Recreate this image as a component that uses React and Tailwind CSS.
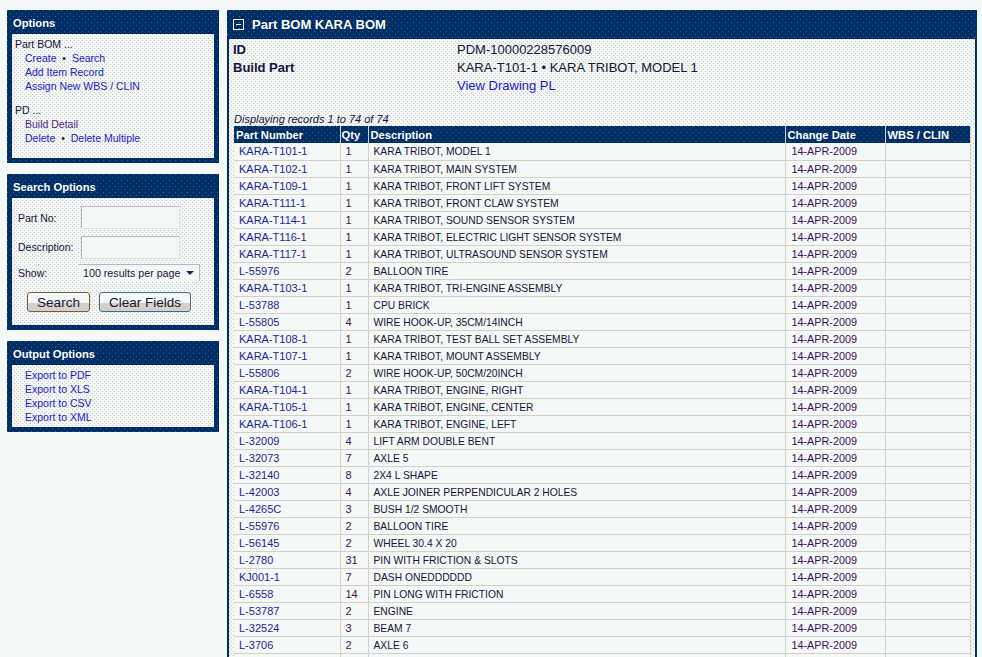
const rows = [
  ["KARA-T101-1", "1", "KARA TRIBOT, MODEL 1"],
  ["KARA-T102-1", "1", "KARA TRIBOT, MAIN SYSTEM"],
  ["KARA-T109-1", "1", "KARA TRIBOT, FRONT LIFT SYSTEM"],
  ["KARA-T111-1", "1", "KARA TRIBOT, FRONT CLAW SYSTEM"],
  ["KARA-T114-1", "1", "KARA TRIBOT, SOUND SENSOR SYSTEM"],
  ["KARA-T116-1", "1", "KARA TRIBOT, ELECTRIC LIGHT SENSOR SYSTEM"],
  ["KARA-T117-1", "1", "KARA TRIBOT, ULTRASOUND SENSOR SYSTEM"],
  ["L-55976", "2", "BALLOON TIRE"],
  ["KARA-T103-1", "1", "KARA TRIBOT, TRI-ENGINE ASSEMBLY"],
  ["L-53788", "1", "CPU BRICK"],
  ["L-55805", "4", "WIRE HOOK-UP, 35CM/14INCH"],
  ["KARA-T108-1", "1", "KARA TRIBOT, TEST BALL SET ASSEMBLY"],
  ["KARA-T107-1", "1", "KARA TRIBOT, MOUNT ASSEMBLY"],
  ["L-55806", "2", "WIRE HOOK-UP, 50CM/20INCH"],
  ["KARA-T104-1", "1", "KARA TRIBOT, ENGINE, RIGHT"],
  ["KARA-T105-1", "1", "KARA TRIBOT, ENGINE, CENTER"],
  ["KARA-T106-1", "1", "KARA TRIBOT, ENGINE, LEFT"],
  ["L-32009", "4", "LIFT ARM DOUBLE BENT"],
  ["L-32073", "7", "AXLE 5"],
  ["L-32140", "8", "2X4 L SHAPE"],
  ["L-42003", "4", "AXLE JOINER PERPENDICULAR 2 HOLES"],
  ["L-4265C", "3", "BUSH 1/2 SMOOTH"],
  ["L-55976", "2", "BALLOON TIRE"],
  ["L-56145", "2", "WHEEL 30.4 X 20"],
  ["L-2780", "31", "PIN WITH FRICTION & SLOTS"],
  ["KJ001-1", "7", "DASH ONEDDDDDD"],
  ["L-6558", "14", "PIN LONG WITH FRICTION"],
  ["L-53787", "2", "ENGINE"],
  ["L-32524", "3", "BEAM 7"],
  ["L-3706", "2", "AXLE 6"],
];

const navy = "bg-[#002d62] bg-[radial-gradient(circle_at_0.5px_0.5px,#1a6fd0_0.6px,transparent_0.7px),radial-gradient(circle_at_0.5px_0.5px,#1260b4_0.6px,transparent_0.7px)] bg-size-[6px_6px] bg-position-[0_0,3px_3px]";
const speckle = "bg-[#f4f8f7] bg-[radial-gradient(circle_at_0.5px_0.5px,#c4c4c0_0.6px,transparent_0.7px),radial-gradient(circle_at_0.5px_0.5px,#c4c4c0_0.6px,transparent_0.7px)] bg-size-[4px_4px] bg-position-[0_0,2px_2px]";

const Panel = ({ title, height, children }) => (
  <div className={`${navy} px-[5px] pb-[5px] w-[212px]`}>
    <h2 className="h-[24px] pl-[1px] pt-[6px] text-[11.2px] leading-[14px] font-bold text-white">{title}</h2>
    <div className={`${speckle} ${height}`}>{children}</div>
  </div>
);

const A = ({ children, visited }) => (
  <a href="#" className={visited ? "text-[#551a8b]" : "text-[#1a1acc]"}>{children}</a>
);

const Th = ({ children, pad }) => (
  <th className={`${navy} h-[17px] ${pad || "pl-[2px]"} text-left font-bold text-white border-r border-[#d4d0c8]`}>{children}</th>
);

export default function App() {
  return (
    <div className="h-[657px] overflow-hidden bg-[#f4f8f7] flex gap-[8px] pl-[7px] pt-[10px] text-[10.5px] leading-[14px] text-[#14143c] font-['Liberation_Sans',Arial,sans-serif]">
      <aside className="flex flex-col gap-[11px]">
        <Panel title="Options" height="h-[124px]">
          <div className="pl-[3px] pt-[3px]">
            <div>Part BOM ...</div>
            <div className="pl-[10px]">
              <div><A>Create</A> &nbsp;•&nbsp; <A>Search</A></div>
              <div><A>Add Item Record</A></div>
              <div><A>Assign New WBS / CLIN</A></div>
            </div>
            <div className="mt-[10px]">PD ...</div>
            <div className="pl-[10px]">
              <div><A visited>Build Detail</A></div>
              <div><A>Delete</A> &nbsp;•&nbsp; <A>Delete Multiple</A></div>
            </div>
          </div>
        </Panel>

        <Panel title="Search Options" height="h-[127px]">
          <div className="pl-[6px] pt-[8px]">
            <div className="flex items-center gap-[9px]">
              <span className="w-[54px]">Part No:</span>
              <input className="w-[99px] h-[23px] bg-[#f4f8f7] border-t border-l border-[#b4b8cc] border-b border-r border-b-[#e4e4e0] border-r-[#e4e4e0]" />
            </div>
            <div className="flex items-center gap-[9px] mt-[7px]">
              <span className="w-[54px] pb-[2px]">Description:</span>
              <input className="w-[99px] h-[23px] bg-[#f4f8f7] border-t border-l border-[#b4b8cc] border-b border-r border-b-[#e4e4e0] border-r-[#e4e4e0]" />
            </div>
            <div className="flex items-center gap-[7px] mt-[5px]">
              <span className="w-[54px]">Show:</span>
              <div className="w-[121px] h-[17px] bg-[#f4f8f7] border-t border-r border-[#b4b8cc] pl-[4px] flex items-center justify-between pr-[5px] text-[10.7px]">
                <span>100 results per page</span>
                <svg width="8" height="4" viewBox="0 0 8 4"><path d="M0 0h8L4 4z" fill="#002d62" /></svg>
              </div>
            </div>
            <div className="flex gap-[9px] ml-[9px] mt-[11px] text-[13.5px]">
              <button className="w-[63px] h-[20px] pt-[1px] rounded-[3px] border border-[#7a5a3c] bg-[linear-gradient(#f4f8f7_55%,#d4d0c8_55%)]">Search</button>
              <button className="w-[92px] h-[20px] pt-[1px] rounded-[3px] border border-[#3c6a9c] bg-[linear-gradient(#f4f8f7_55%,#d4d0c8_55%)]">Clear Fields</button>
            </div>
          </div>
        </Panel>

        <Panel title="Output Options" height="h-[62px]">
          <div className="pl-[13px] pt-[3px]">
            <div><A>Export to PDF</A></div>
            <div><A>Export to XLS</A></div>
            <div><A>Export to CSV</A></div>
            <div><A>Export to XML</A></div>
          </div>
        </Panel>
      </aside>

      <main className="w-[750px] flex flex-col h-[700px] border-x-2 border-[#002d62]">
        <div className={`${navy} h-[29px] -mx-[2px] flex items-center pl-[6px] gap-[8px] shrink-0`}>
          <span className="w-[11px] h-[11px] border border-white flex items-center justify-center">
            <span className="w-[5px] h-[1px] bg-white" />
          </span>
          <h1 className="text-[13px] font-bold text-white">Part BOM KARA BOM</h1>
        </div>
        <div className={`${speckle} flex-1 pl-[4px] pr-[5px] pt-[2px]`}>
          <div className="grid grid-cols-[224px_1fr] text-[13px] leading-[18px]">
            <span className="font-bold">ID</span>
            <span>PDM-10000228576009</span>
            <span className="font-bold">Build Part</span>
            <span>KARA-T101-1 • KARA TRIBOT, MODEL 1</span>
            <span />
            <span><A>View Drawing PL</A></span>
          </div>
          <div className="italic mt-[17px] h-[14px] pl-[1px] text-[11px]">Displaying records 1 to 74 of 74</div>
          <table className="table-fixed border-collapse ml-[1px] w-[737px] bg-[#f4f8f7] text-[11.2px] border-r border-[#d4d0c8]">
            <colgroup>
              <col className="w-[106px]" />
              <col className="w-[28px]" />
              <col className="w-[417px]" />
              <col className="w-[100px]" />
              <col />
            </colgroup>
            <thead>
              <tr>
                <Th>Part Number</Th>
                <Th pad="pl-[1px]">Qty</Th>
                <Th>Description</Th>
                <Th>Change Date</Th>
                <Th>WBS / CLIN</Th>
              </tr>
            </thead>
            <tbody>
              {rows.map((r, i) => (
                <tr key={i} className="h-[17px] border-b border-[#d4d0c8]">
                  <td className="pl-[5px] border-r border-[#d4d0c8] text-[11px] text-[#1f1f99]"><a href="#">{r[0]}</a></td>
                  <td className="pl-[5px] border-r border-[#d4d0c8] text-[11px] text-[#4a1050]">{r[1]}</td>
                  <td className="pl-[5px] pt-[2px] border-r border-[#d4d0c8] text-[10.3px] leading-[14px] align-top">{r[2]}</td>
                  <td className="pl-[6px] border-r border-[#d4d0c8] text-[10.8px] text-[#3a1060]">14-APR-2009</td>
                  <td />
                </tr>
              ))}
              <tr className="h-[17px]">
                <td className="border-r border-[#d4d0c8]" />
                <td className="border-r border-[#d4d0c8]" />
                <td className="border-r border-[#d4d0c8]" />
                <td className="border-r border-[#d4d0c8]" />
                <td />
              </tr>
            </tbody>
          </table>
        </div>
      </main>
    </div>
  );
}
